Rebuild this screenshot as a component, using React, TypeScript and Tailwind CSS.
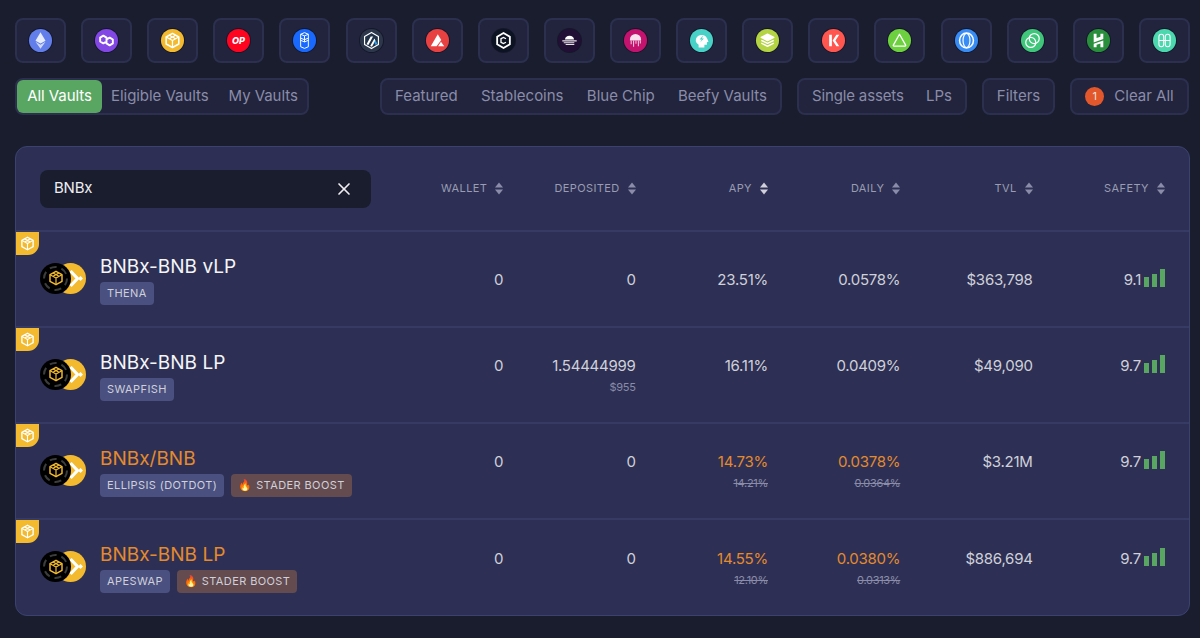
import type { ReactNode } from 'react'
import { X } from 'lucide-react'

const font = { fontFamily: 'Inter, "Noto Sans", sans-serif' }

const cubeOuter = 'M12 2 21 7v10l-9 5-9-5V7Z'
const cubeInner = 'M3 7l9 5 9-5M12 12v10M7.5 4.5l9 5M16.5 4.5l-9 5'

function Cube({ color = '#fff', size = 16 }: { color?: string; size?: number }) {
  return (
    <svg width={size} height={size} viewBox="0 0 24 24" fill="none" stroke={color} strokeWidth="2.2" strokeLinejoin="round">
      <path d={cubeOuter} />
      <path d={cubeInner} strokeWidth="1.8" />
    </svg>
  )
}

const chains: { bg: string; art: ReactNode }[] = [
  {
    bg: '#627eea',
    art: (
      <>
        <path d="M12 3.5 6.8 12.2 12 15.2l5.2-3Z" fill="#fff" opacity=".85" />
        <path d="M6.8 13.3 12 20.5l5.2-7.2L12 16.3Z" fill="#fff" opacity=".7" />
      </>
    ),
  },
  {
    bg: '#8247e5',
    art: (
      <path
        d="M12 12V9L8.7 7 5.4 9v4l3.3 2 3.3-2M12 12v3l3.3 2 3.3-2v-4l-3.3-2-3.3 2"
        fill="none"
        stroke="#fff"
        strokeWidth="2"
        strokeLinejoin="round"
      />
    ),
  },
  {
    bg: '#f3ba2f',
    art: (
      <g transform="translate(3.2 3.2) scale(.73)" fill="none" stroke="#fff" strokeWidth="2.2" strokeLinejoin="round">
        <path d={cubeOuter} />
        <path d={cubeInner} strokeWidth="1.8" />
      </g>
    ),
  },
  {
    bg: '#ff0420',
    art: (
      <text x="12" y="15.2" textAnchor="middle" fill="#fff" fontSize="9.5" fontWeight="800" fontStyle="italic" fontFamily="Inter, sans-serif">
        OP
      </text>
    ),
  },
  {
    bg: '#1969ff',
    art: (
      <g fill="none" stroke="#fff" strokeWidth="1">
        <path d="M8 5.5 12 3.8l4 1.7v13L12 20.2l-4-1.7Z" />
        <path d="M8 5.5 12 7.2l4-1.7M8 11.8l4 1.7 4-1.7M8 9.5l4 1.7 4-1.7M12 7.2v6.3" />
      </g>
    ),
  },
  {
    bg: '#2c374b',
    art: (
      <>
        <path d="M12 3.6 19.2 7.8v8.4L12 20.4l-7.2-4.2V7.8Z" fill="#213147" stroke="#fff" strokeWidth="1.2" strokeLinejoin="round" />
        <path d="M6.8 15.8 11.2 7.8h2.4L8.8 16.8ZM10.6 17.6 15 9.8l1.1 2.1-3.6 6.5Z" fill="#fff" />
        <path d="m14.8 14 1.4-2.2 2 3.8-1.8 1Z" fill="#28a0f0" />
      </>
    ),
  },
  {
    bg: '#e84142',
    art: (
      <>
        <path d="M12.3 5.5 15.9 11.6 11 18H5Z" fill="#fff" />
        <path d="M15.6 13.4 19 18h-6.4Z" fill="#fff" />
      </>
    ),
  },
  {
    bg: '#0c1322',
    art: (
      <>
        <path d="M12 4.2 18.6 8v8L12 19.8 5.4 16V8Z" fill="none" stroke="#fff" strokeWidth="1.9" />
        <path d="M14.6 10.2 12 8.8 9.4 10.2v3.6l2.6 1.4 2.6-1.4" fill="none" stroke="#fff" strokeWidth="1.4" />
      </>
    ),
  },
  {
    bg: '#220f35',
    art: (
      <>
        <path d="M7.2 11a4.9 4.9 0 0 1 9.6 0Z" fill="#fff" />
        <path d="M4.5 12.4h15M6 14.4h11M8 16.2h9" stroke="#e7e2ea" strokeWidth="1.1" />
      </>
    ),
  },
  {
    bg: '#c3136e',
    art: (
      <>
        <path d="M6.2 11a5.8 5.8 0 0 1 11.6 0v1H6.2Z" fill="#f7e3ee" />
        <path d="M7.5 12v4M10 12v6.5M12.5 12v3.5M15 12v6M17 12v3" stroke="#f7c5de" strokeWidth="1.1" />
      </>
    ),
  },
  {
    bg: '#48d1c6',
    art: (
      <>
        <path d="M6 12.5a6.2 6.2 0 0 1 12-2.2l1.3 3-1.7.5v2.5h-2.6v3H9v-2.8a6 6 0 0 1-3-4Z" fill="#fff" />
        <path d="m14 6.5-4 4.5h2.4L10.5 14l4-4h-2.2Z" fill="#48d1c6" />
      </>
    ),
  },
  {
    bg: '#b5d444',
    art: (
      <g fill="none" stroke="#fff" strokeWidth="1.5" strokeLinejoin="round">
        <path d="m12 5.5 6.5 3.3L12 12 5.5 8.8Z" fill="#fff" />
        <path d="m5.5 11.8 6.5 3.2 6.5-3.2M5.5 14.8 12 18l6.5-3.2" />
      </g>
    ),
  },
  {
    bg: '#ff564f',
    art: <path d="M7.5 6h2.8v12H7.5Zm3.6 6L15 6h3l-4 6 4 6h-3Z" fill="#fff" />,
  },
  {
    bg: '#6cd03f',
    art: <path d="M12 5.5 18.4 16.8a.7.7 0 0 1-.6 1H6.2a.7.7 0 0 1-.6-1Z" fill="none" stroke="#fff" strokeWidth="1.4" strokeLinejoin="round" />,
  },
  {
    bg: '#378df5',
    art: (
      <g fill="none" stroke="#fff">
        <ellipse cx="12" cy="12" rx="7.2" ry="7.8" strokeWidth="1.6" />
        <ellipse cx="12" cy="12" rx="3.6" ry="7.4" strokeWidth="1.2" />
      </g>
    ),
  },
  {
    bg: '#3fc67a',
    art: (
      <g fill="none" stroke="#fff" strokeWidth="1.3">
        <circle cx="13.8" cy="10" r="5.2" />
        <circle cx="10.2" cy="14" r="5.2" />
      </g>
    ),
  },
  {
    bg: '#2a8f3c',
    art: (
      <>
        <path d="M7 5h3v4.5l4-1.5V5h3v5.5l-10 3.5Z" fill="#fff" />
        <path d="M7 15.5 17 12v7h-3v-4l-4 1.5V19H7Z" fill="#fff" />
      </>
    ),
  },
  {
    bg: '#4bd8ae',
    art: (
      <g fill="none" stroke="#fff" strokeWidth="1.1">
        <rect x="6.2" y="5.5" width="5" height="13" rx="2.5" />
        <rect x="12.8" y="5.5" width="5" height="13" rx="2.5" />
        <path d="M6.2 12h11.6" />
      </g>
    ),
  },
]

function ChainIcon({ bg, art }: { bg: string; art: ReactNode }) {
  return (
    <button className="flex h-[45px] w-[51px] items-center justify-center rounded-lg border-2 border-[#2c2f4e] bg-[#21243c]">
      <svg width="25" height="25" viewBox="-1 -1 26 26">
        <circle cx="12" cy="12" r="13" fill="#15172a" />
        <circle cx="12" cy="12" r="12" fill={bg} />
        {art}
      </svg>
    </button>
  )
}

function Pill({ children, className = '' }: { children: ReactNode; className?: string }) {
  return (
    <div className={`flex h-[37px] items-center rounded-lg border-2 border-[#2c2f4e] bg-[#21243c] text-[15px] text-[#8a8ca9] ${className}`}>
      {children}
    </div>
  )
}

function SortIcon({ active = false }: { active?: boolean }) {
  return (
    <svg width="8" height="13" viewBox="0 0 8 13" fill={active ? '#d0d0da' : '#8a8ca9'}>
      <path d="M4 0.5 8 5.5H0Z" />
      <path d="M0 7.5h8L4 12.5Z" />
    </svg>
  )
}

function HeadCell({ label, active }: { label: string; active?: boolean }) {
  return (
    <div className="flex items-center justify-end gap-[8px] text-[11px] tracking-[0.4px] text-[#999cb3]">
      {label}
      <SortIcon active={active} />
    </div>
  )
}

function Tokens() {
  return (
    <div className="-mt-[2px] flex w-[60px] shrink-0 items-center">
      <div className="relative z-10 flex h-[31px] w-[31px] items-center justify-center rounded-full bg-black">
        <svg width="31" height="31" viewBox="0 0 31 31" fill="none" className="absolute inset-0" stroke="#3d3d3d" strokeWidth="2">
          <circle cx="15.5" cy="15.5" r="11.5" strokeDasharray="7 5" />
        </svg>
        <Cube color="#f3ba2f" size={16} />
      </div>
      <svg width="31" height="31" viewBox="0 0 31 31" className="-ml-[16px] shrink-0">
        <circle cx="15.5" cy="15.5" r="15.5" fill="#f3ba2f" />
        <path d="M15.5 8 22.5 15.5 15.5 23" fill="none" stroke="#fff" strokeWidth="3.2" />
        <path d="m25.5 13 2.5 2.5-2.5 2.5-2.5-2.5Z" fill="#fff" />
      </svg>
    </div>
  )
}

function Tag({ children, boost = false }: { children: ReactNode; boost?: boolean }) {
  return (
    <span
      className={`flex h-[23px] items-center rounded-[4px] px-[7px] text-[11px] tracking-[0.4px] text-[#d0d0da] ${
        boost ? 'bg-[#634b4f]' : 'bg-[#4a5080]'
      }`}
    >
      {children}
    </span>
  )
}

function Bars() {
  return (
    <div className="mb-[4px] ml-[3px] flex items-end gap-[3px]">
      <div className="h-[10px] w-[5px] bg-[#59a662]" />
      <div className="h-[13px] w-[5px] bg-[#59a662]" />
      <div className="h-[18px] w-[5px] bg-[#59a662]" />
    </div>
  )
}

function Value({ main, sub, boosted, strike = true, tall }: { main: string; sub?: string; boosted?: boolean; strike?: boolean; tall: boolean }) {
  return (
    <div className={`mt-[2px] flex flex-col items-end ${tall ? 'h-[42px]' : ''}`}>
      <div className={`text-[15px] leading-[22px] tracking-[-0.25px] ${boosted ? 'text-[#e58a2d]' : 'text-[#d0d0da]'}`}>{main}</div>
      {sub && (
        <div className={`mt-[1px] text-[11px] leading-[18px] tracking-[-0.3px] text-[#8a8ca9] ${strike ? 'line-through' : ''}`}>{sub}</div>
      )}
    </div>
  )
}

const rows = [
  { name: 'BNBx-BNB vLP', tag: 'THENA', wallet: '0', deposited: '0', apy: '23.51%', daily: '0.0578%', tvl: '$363,798', safety: '9.1' },
  { name: 'BNBx-BNB LP', tag: 'SWAPFISH', wallet: '0', deposited: '1.54444999', depositedSub: '$955', apy: '16.11%', daily: '0.0409%', tvl: '$49,090', safety: '9.7' },
  { name: 'BNBx/BNB', tag: 'ELLIPSIS (DOTDOT)', boost: true, wallet: '0', deposited: '0', apy: '14.73%', apySub: '14.21%', daily: '0.0378%', dailySub: '0.0364%', tvl: '$3.21M', safety: '9.7' },
  { name: 'BNBx-BNB LP', tag: 'APESWAP', boost: true, wallet: '0', deposited: '0', apy: '14.55%', apySub: '12.10%', daily: '0.0380%', dailySub: '0.0313%', tvl: '$886,694', safety: '9.7' },
]

export default function App() {
  return (
    <div style={font} className="h-[638px] w-[1200px] overflow-hidden bg-[#1a1d2e] pt-[18px] pr-[10px] pl-[15px]">
      <div className="flex justify-between">
        {chains.map((c, i) => (
          <ChainIcon key={i} bg={c.bg} art={c.art} />
        ))}
      </div>

      <div className="mt-[15px] flex">
        <Pill className="w-[294px] tracking-[-0.05px]">
          <div className="flex h-full w-[85px] items-center justify-center rounded-md bg-[#59a662] text-white">All Vaults</div>
          <span className="ml-[9px]">Eligible Vaults</span>
          <span className="ml-[20px]">My Vaults</span>
        </Pill>
        <Pill className="ml-[71px] w-[402px] justify-between px-[13px]">
          <span>Featured</span>
          <span>Stablecoins</span>
          <span>Blue Chip</span>
          <span>Beefy Vaults</span>
        </Pill>
        <Pill className="ml-[15px] w-[170px] justify-between px-[13px]">
          <span className="tracking-[-0.15px]">Single assets</span>
          <span>LPs</span>
        </Pill>
        <Pill className="ml-[15px] w-[73px] justify-center">Filters</Pill>
        <Pill className="ml-[15px] w-[119px] justify-center gap-[10px]">
          <span className="flex h-[19px] w-[19px] items-center justify-center rounded-full bg-[#e2572b] text-[11px] text-[#f4e3dc]">1</span>
          <span>Clear All</span>
        </Pill>
      </div>

      <div className="mt-[31px] overflow-hidden rounded-xl border border-[#3c4270] bg-[#2d3054]">
        <div className="grid h-[83px] grid-cols-[331px_repeat(6,1fr)] items-center px-[24px]">
          <div className="flex h-[38px] items-center justify-between rounded-lg bg-[#1a1d2e] pr-[17px] pl-[14px] text-[15px] tracking-[-0.2px] text-[#eeeef2]">
            BNBx
            <X size={20} strokeWidth={2} color="#eeeef2" />
          </div>
          <HeadCell label="WALLET" />
          <HeadCell label="DEPOSITED" />
          <HeadCell label="APY" active />
          <HeadCell label="DAILY" />
          <HeadCell label="TVL" />
          <HeadCell label="SAFETY" />
        </div>

        {rows.map((r, i) => {
          const tall = !!(r.depositedSub || r.apySub || r.dailySub)
          return (
            <div key={i} className="relative grid h-[96px] grid-cols-[331px_repeat(6,1fr)] items-center border-t-2 border-[#363b66] px-[24px] last:h-[97px]">
              <div className="absolute top-0 left-0 flex h-[23px] w-[23px] items-center justify-center rounded-br-[11px] bg-[#f3ba2f]">
                <Cube size={15} />
              </div>
              <div className="flex items-center">
                <Tokens />
                <div>
                  <div className={`text-[19px] leading-[26px] ${r.boost ? 'text-[#e58a2d]' : 'text-[#f5f5f7]'}`}>{r.name}</div>
                  <div className="mt-[2px] flex gap-[7px]">
                    <Tag>{r.tag}</Tag>
                    {r.boost && <Tag boost>🔥 STADER BOOST</Tag>}
                  </div>
                </div>
              </div>
              <Value main={r.wallet} tall={tall} />
              <Value main={r.deposited} sub={r.depositedSub} strike={false} tall={tall} />
              <Value main={r.apy} sub={r.apySub} boosted={r.boost} tall={tall} />
              <Value main={r.daily} sub={r.dailySub} boosted={r.boost} tall={tall} />
              <Value main={r.tvl} tall={tall} />
              <div className={`mt-[2px] flex items-start justify-end ${tall ? 'h-[42px]' : ''}`}>
                <div className="flex h-[22px] items-end">
                  <span className="text-[15px] leading-[22px] tracking-[-0.25px] text-[#d0d0da]">{r.safety}</span>
                  <Bars />
                </div>
              </div>
            </div>
          )
        })}
      </div>
    </div>
  )
}
